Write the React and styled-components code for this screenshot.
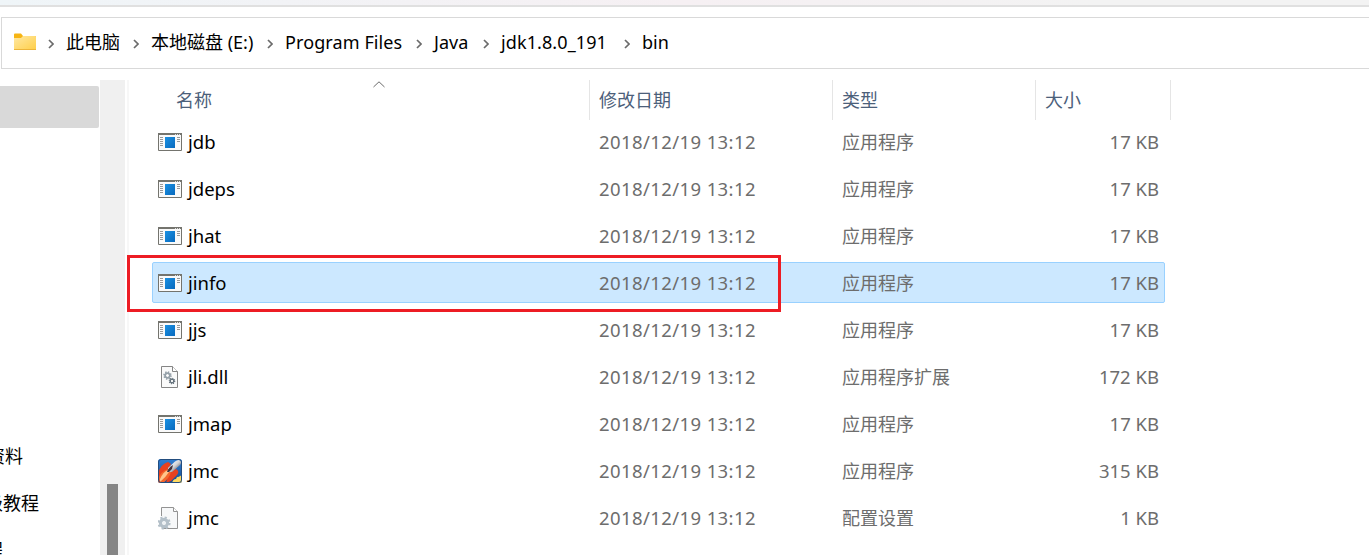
import React from 'react';
import styled, { createGlobalStyle } from 'styled-components';

const GlobalStyle = createGlobalStyle`
  * {
    box-sizing: border-box;
  }

  body {
    margin: 0;
    background-color: #fff;
    font-family: 'Noto Sans', 'Noto Sans CJK SC', sans-serif;
    font-size: 18px;
    overflow: hidden;
  }
`;

const Window = styled.div`
  display: flex;
  flex-direction: column;
  height: 100vh;
  overflow: hidden;
  color: #000;
`;

const TopStrip = styled.div`
  flex: none;
  height: 7px;
  background: linear-gradient(90deg, #eff5f8 0%, #f6f0f3 50%, #f3f3f3 80%);
  border-bottom: 2px solid #e0e0e0;
`;

const AddressBar = styled.div`
  flex: none;
  display: flex;
  align-items: center;
  height: 52px;
  margin: 10px 0 11px 1px;
  padding: 0 0 2px 12px;
  border: 1px solid #d9d9d9;
  border-right: none;
`;

const Chevron = styled.svg`
  flex: none;
  width: 6px;
  height: 10px;
  margin: 3px 0 0 ${(props) => props.$before}px;
`;

const Crumb = styled.span`
  flex: none;
  width: ${(props) => props.$width}px;
  margin-left: ${(props) => props.$gap}px;
  line-height: 26px;
  white-space: nowrap;
  letter-spacing: ${(props) => props.$spacing || 0}px;
`;

const Content = styled.div`
  flex: 1;
  display: flex;
  min-height: 0;
`;

const Sidebar = styled.div`
  flex: none;
  width: 100px;
  padding-top: 6px;
  overflow: hidden;
`;

const SidebarSelected = styled.div`
  width: 99px;
  height: 42px;
  margin-bottom: 303px;
  background-color: #d9d9d9;
  border-radius: 0 2px 2px 0;
`;

const SidebarItem = styled.div`
  display: flex;
  justify-content: flex-end;
  align-items: center;
  width: ${(props) => props.$width}px;
  height: 47px;
  white-space: nowrap;
`;

const ScrollTrack = styled.div`
  flex: none;
  width: 25px;
  padding: 404px 7px 0;
  background-color: #f0f0f0;
`;

const ScrollThumb = styled.div`
  width: 11px;
  height: 100%;
  background-color: #858585;
`;

const Divider = styled.div`
  flex: none;
  width: 2px;
  margin: 0 0 0 2px;
  background-color: #f7f7f7;
`;

const FileList = styled.div`
  flex: none;
  position: relative;
  width: 1042px;
`;

const Header = styled.div`
  display: grid;
  grid-template-columns: 461px 243px 203px 135px;
  height: 40px;
  margin-bottom: 1px;
  color: #4c607a;
`;

const HeaderCell = styled.div`
  position: relative;
  padding: 7px 0 0 ${(props) => (props.$first ? 47 : 9)}px;
  line-height: 26px;
  border-right: 1px solid #e5e5e5;
`;

const SortArrow = styled.svg`
  position: absolute;
  top: 1px;
  left: 244px;
  width: 12px;
  height: 7px;
`;

const Row = styled.div`
  display: grid;
  grid-template-columns: 30px 411px 243px 203px 114px;
  align-items: center;
  width: 1013px;
  height: 41px;
  margin: 0 0 6px 23px;
  padding-left: 5px;
  color: #6d6d6d;
  line-height: 26px;
  border: 1px solid ${(props) => (props.$selected ? '#99d1ff' : 'transparent')};
  border-radius: 2px;
  background-color: ${(props) => (props.$selected ? '#cce8ff' : 'transparent')};
`;

const FileName = styled.span`
  color: #000;
  font-size: 18.5px;
`;

const FileDate = styled.span`
  font-size: 18.5px;
  letter-spacing: 0.4px;
`;

const FileSize = styled.span`
  font-size: 18.5px;
  text-align: right;
`;

const Highlight = styled.div`
  position: absolute;
  top: 175px;
  left: -2px;
  width: 654px;
  height: 57px;
  border: 3px solid #ed1c24;
`;

const FolderIcon = () => (
  <svg width="22" height="18" viewBox="0 0 22 18">
    <defs>
      <linearGradient id="folder" x1="0" y1="0" x2="1" y2="1">
        <stop offset="0" stopColor="#ffe8a3" />
        <stop offset="1" stopColor="#ffcf48" />
      </linearGradient>
    </defs>
    <path d="M0 1.5Q0 .5 1 .5H7L9 3H21Q22 3 22 4V7H0Z" fill="#f7b513" />
    <path d="M0 5H7L9 3H21Q22 3 22 4V16Q22 17 21 17H1Q0 17 0 16Z" fill="url(#folder)" />
    <path d="M0 16.5H22" stroke="#edb53a" />
  </svg>
);

const AppIcon = () => (
  <svg width="24" height="18" viewBox="0 0 24 18">
    <defs>
      <linearGradient id="app" x1="0" y1="0" x2="1" y2="1">
        <stop offset="0" stopColor="#1b91e3" />
        <stop offset="1" stopColor="#0869bd" />
      </linearGradient>
    </defs>
    <path d="M.5 .5H23.5V17.5H.5Z" fill="#fafafa" stroke="#74746e" />
    <path d="M0 1H24" stroke="#74746e" strokeWidth="2" />
    <path d="M17 1.5H22" stroke="#ddd" strokeDasharray="1 1" />
    <rect x="7" y="4" width="10" height="11" fill="url(#app)" />
    <path d="M2 4.5H5M2 6.5H5M2 8.5H5M2 10.5H5M2 12.5H5M19 4.5H22M19 6.5H22M19 8.5H22" stroke="#999" />
  </svg>
);

const Gear = ({ x, y, r, color, hole }) => (
  <g transform={`translate(${x} ${y})`}>
    <circle r={r} fill="none" stroke={color} strokeWidth={r * 0.45} strokeDasharray={`${r * 0.39} ${r * 0.395}`} />
    <circle r={r * 0.65} fill="none" stroke={color} strokeWidth={r * 0.6} />
    <circle r={r * 0.34} fill={hole} />
  </g>
);

const DllIcon = () => (
  <svg width="24" height="24" viewBox="0 0 24 24">
    <path d="M3.5 1.5H14.5L19.5 6.5V22.5H3.5Z" fill="#fafafa" stroke="#858585" />
    <path d="M14.5 1.5V6.5H19.5" fill="#fff" stroke="#858585" />
    <Gear x={9.5} y={10.5} r={3.5} color="#95a0a8" hole="#fff" />
    <Gear x={14} y={16} r={2.7} color="#66737d" hole="#fff" />
  </svg>
);

const RocketIcon = () => (
  <svg width="24" height="24" viewBox="0 0 24 24">
    <defs>
      <linearGradient id="sky" x1="0" y1="0" x2="0" y2="1">
        <stop offset="0" stopColor="#2f7fd3" />
        <stop offset="1" stopColor="#164a91" />
      </linearGradient>
      <linearGradient id="hull" x1="0" y1="0" x2="1" y2="1">
        <stop offset="0.2" stopColor="#f4f5f7" />
        <stop offset="0.5" stopColor="#d3d5d9" />
        <stop offset="0.8" stopColor="#6a6b73" />
      </linearGradient>
      <clipPath id="tile">
        <rect width="24" height="24" rx="2.5" />
      </clipPath>
    </defs>
    <g clipPath="url(#tile)">
      <rect width="24" height="24" fill="url(#sky)" />
      <path d="M0 14Q3 5 10 3L13 5L10 10L3 17L0 22Z" fill="#e8411f" />
      <path d="M11 13L18 10Q22 12 19 16L13 22L8 24L10 17Z" fill="#e8411f" />
      <path d="M0 20Q3 12 10 10L13 13Q11 20 5 24H0Z" fill="#f4652b" />
      <path d="M2 20Q5 13 10 11L11 13Q8 18 2 23Z" fill="#ffc58b" />
      <path d="M14 24Q15 20 18 20Q19 17 21 18Q22 16 24 17V24Z" fill="#ffd960" />
      <path d="M10 9L17 2.5Q20 0 22.5 1.5Q24 4 21.5 6.5L14 13L10 13Z" fill="url(#hull)" />
      <path d="M9 13Q10 9 15 6L14 10L11 13Z" fill="#40313c" />
    </g>
    <rect x=".5" y=".5" width="23" height="23" rx="2.5" fill="none" stroke="#234d7e" />
  </svg>
);

const ConfigIcon = () => (
  <svg width="24" height="24" viewBox="0 0 24 24">
    <path d="M3.5 1.5H15.5L19.5 5.5V22.5H3.5Z" fill="#f7f8f9" stroke="#939393" />
    <path d="M15.5 1.5V5.5H19.5" fill="#fff" stroke="#939393" />
    <path d="M0 10H4V24H0Z" fill="#fff" />
    <Gear x={6} y={17} r={5.4} color="#b4c0c9" hole="#edf1f4" />
  </svg>
);

const icons = {
  app: AppIcon,
  dll: DllIcon,
  rocket: RocketIcon,
  config: ConfigIcon,
};

const crumbs = [
  { label: '此电脑', before: 12, gap: 12, width: 54 },
  { label: '本地磁盘 (E:)', before: 13, gap: 12, width: 103 },
  { label: 'Program Files', before: 13, gap: 12, width: 118, spacing: 0.1 },
  { label: 'Java', before: 13, gap: 12, width: 37 },
  { label: 'jdk1.8.0_191', before: 12, gap: 12, width: 110, spacing: 0.1 },
  { label: 'bin', before: 13, gap: 12, width: 30 },
];

const files = [
  { name: 'jdb', icon: 'app', type: '应用程序', size: '17 KB' },
  { name: 'jdeps', icon: 'app', type: '应用程序', size: '17 KB' },
  { name: 'jhat', icon: 'app', type: '应用程序', size: '17 KB' },
  { name: 'jinfo', icon: 'app', type: '应用程序', size: '17 KB', selected: true },
  { name: 'jjs', icon: 'app', type: '应用程序', size: '17 KB' },
  { name: 'jli.dll', icon: 'dll', type: '应用程序扩展', size: '172 KB' },
  { name: 'jmap', icon: 'app', type: '应用程序', size: '17 KB' },
  { name: 'jmc', icon: 'rocket', type: '应用程序', size: '315 KB' },
  { name: 'jmc', icon: 'config', type: '配置设置', size: '1 KB' },
];

const App = () => {
  return (
    <Window>
      <GlobalStyle />
      <TopStrip />
      <AddressBar>
        <FolderIcon />
        {crumbs.map((crumb) => (
          <React.Fragment key={crumb.label}>
            <Chevron $before={crumb.before} viewBox="0 0 6 10">
              <path d="M1 1L5 5L1 9" fill="none" stroke="#6b6b6b" strokeWidth="1.7" />
            </Chevron>
            <Crumb $gap={crumb.gap} $width={crumb.width} $spacing={crumb.spacing}>{crumb.label}</Crumb>
          </React.Fragment>
        ))}
      </AddressBar>
      <Content>
        <Sidebar>
          <SidebarSelected />
          <SidebarItem $width={23}>资料</SidebarItem>
          <SidebarItem $width={39}>级教程</SidebarItem>
          <SidebarItem $width={3}>程</SidebarItem>
        </Sidebar>
        <ScrollTrack>
          <ScrollThumb />
        </ScrollTrack>
        <Divider />
        <FileList>
          <Header>
            <HeaderCell $first>
              名称
              <SortArrow viewBox="0 0 12 7">
                <path d="M.5 6L6 .8L11.5 6" fill="none" stroke="#6b6b6b" />
              </SortArrow>
            </HeaderCell>
            <HeaderCell>修改日期</HeaderCell>
            <HeaderCell>类型</HeaderCell>
            <HeaderCell>大小</HeaderCell>
          </Header>
          {files.map((file, index) => {
            const Icon = icons[file.icon];
            return (
              <Row key={index} $selected={file.selected}>
                <Icon />
                <FileName>{file.name}</FileName>
                <FileDate>2018/12/19 13:12</FileDate>
                <span>{file.type}</span>
                <FileSize>{file.size}</FileSize>
              </Row>
            );
          })}
          <Highlight />
        </FileList>
      </Content>
    </Window>
  );
};

export default App;
